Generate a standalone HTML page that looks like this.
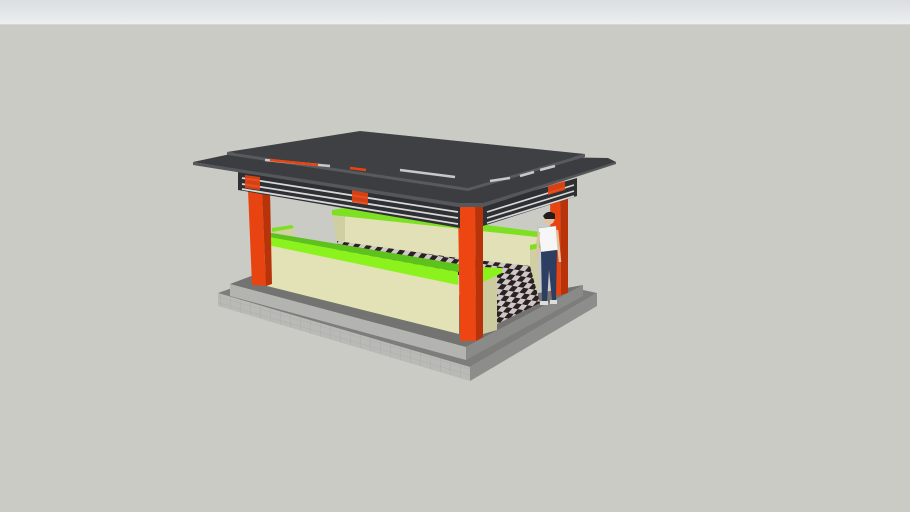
<!DOCTYPE html>
<html><head><meta charset="utf-8"><style>
html,body{margin:0;padding:0;width:910px;height:512px;overflow:hidden;background:#cbcbc6}
</style></head><body>
<svg width="910" height="512" viewBox="0 0 910 512" xmlns="http://www.w3.org/2000/svg">
<defs>
<linearGradient id="sky" x1="0" y1="0" x2="0" y2="1"><stop offset="0" stop-color="#dadee1"/><stop offset="1" stop-color="#eceeef"/></linearGradient>
<pattern id="chk" width="11" height="11" patternUnits="userSpaceOnUse" patternTransform="rotate(10) skewX(-30)">
<rect width="11" height="11" fill="#cfc6c6"/><rect width="5.5" height="5.5" fill="#2a2222"/><rect x="5.5" y="5.5" width="5.5" height="5.5" fill="#2a2222"/></pattern>
<pattern id="brick" width="10" height="6" patternUnits="userSpaceOnUse" patternTransform="skewY(16)">
<rect width="10" height="6" fill="#b9b9b6"/><path d="M0 0H10M0 0V6" stroke="#a2a29f" stroke-width="0.6"/></pattern>
</defs>
<rect width="910" height="24" fill="url(#sky)"/>
<rect y="24" width="910" height="1" fill="#d6d6d2"/>

<!-- lower slab -->
<polygon points="218,293 470,367 470,381 218,306" fill="url(#brick)"/>
<polygon points="470,367 597,293 597,306 470,381" fill="#8d8d8b"/>
<polygon points="218,293 232,288 470,355 583,290 597,293 470,367" fill="#7d7d7b"/>
<!-- upper slab -->
<polygon points="230,284 466,347 466,360 230,296" fill="#b3b3b0"/>
<polygon points="466,347 583,285 583,296 466,360" fill="#8a8a88"/>
<polygon points="230,284 262,272 500,300 583,285 466,347" fill="#737371"/>

<!-- back column -->
<polygon points="350,170 368,172 368,212 350,210" fill="#e84412"/>
<!-- back wall -->
<polygon points="337,215 337,242 532,268 537,237" fill="#e1e0b6"/>
<polygon points="332,214 345,211 345,241 337,242" fill="#cfcfa2"/>
<polygon points="332,210 350,207 540,232 537,237 332,215" fill="#7de022"/>
<polygon points="272,231 294,227 294,240 272,240" fill="#d0d0a4"/>
<polygon points="272,228 292,225 294,228 272,232" fill="#7de022"/>
<!-- right side wall -->
<polygon points="530,247 538,245 538,300 530,302" fill="#d0cfa4"/>
<polygon points="530,245 540,243 540,248 530,250" fill="#7de022"/>
<!-- checker floor -->
<polygon points="337,241 458,258 530,266 540,303 497,324 497,275 458,275 337,255" fill="url(#chk)"/>
<!-- front wall -->
<polygon points="263,242 459,284 459,334 267,286" fill="#e3e2b6"/>
<polygon points="483,280 497,276 497,330 483,334" fill="#cdcca0"/>
<!-- front cap -->
<polygon points="258,235 272,233 470,266 458,272" fill="#5ec21c"/>
<polygon points="258,235 458,272 458,285 258,243" fill="#8cf21e"/>
<polygon points="483,267 502,268 502,273 483,282" fill="#8cf21e"/>

<!-- columns -->
<polygon points="248,190 262,192 266,286 252,285" fill="#e84412"/>
<polygon points="262,192 270,190 272,284 266,286" fill="#b8330a"/>
<polygon points="458,205 475,205 476,341 460,341" fill="#ee4612"/>
<polygon points="475,205 483,203 483,337 476,341" fill="#b8330a"/>
<polygon points="550,192 560,192 561,295 551,296" fill="#e84412"/>
<polygon points="560,192 568,190 568,293 561,295" fill="#b8330a"/>

<!-- fascia -->
<polygon points="238,170 460,205 460,228 238,190" fill="#2f3033"/>
<path d="M242 178 L458 212 M242 184 L458 218 M242 189 L458 224" stroke="#d8d8d8" stroke-width="1.8"/>
<polygon points="245,175 260,177 260,190 245,188" fill="#e84412" opacity=".9"/>
<polygon points="352,190 368,193 368,205 352,202" fill="#e84412" opacity=".9"/>
<polygon points="483,205 577,178 577,196 483,226" fill="#2f3033"/>
<path d="M487 212 L574 185 M487 218 L574 191 M487 223 L574 196" stroke="#d8d8d8" stroke-width="1.7"/>
<polygon points="548,186 565,181 565,190 548,195" fill="#e84412" opacity=".9"/>

<!-- lower roof -->
<polygon points="193,162 240,152 608,158 616,162 483,205 458,205" fill="#3c3d40"/>
<polygon points="193,162 458,203 483,203 616,162 616,164 483,207 458,207 193,165" fill="#56575a"/>
<!-- upper roof -->
<polygon points="227,152 360,131 585,154 468,188" fill="#3f4043"/>
<polygon points="227,152 468,188 585,154 585,157 468,191 227,155" fill="#595a5d"/>
<path d="M265 160 L330 166 M400 170 L455 177 M490 181 L510 178 M520 176 L534 172 M540 170 L555 166" stroke="#c8c8c8" stroke-width="2.5"/>
<path d="M270 160 L318 165" stroke="#e84412" stroke-width="2.5"/>
<path d="M350 168 L366 170" stroke="#e84412" stroke-width="2.5"/>

<!-- person -->
<circle cx="549" cy="219" r="5.5" fill="#e2c2a0"/>
<path d="M543 216 Q548 209 555 214 L555 219 L545 219 Z" fill="#1e1e1e"/>
<polygon points="538,228 556,226 558,250 541,252" fill="#f6f6f6" stroke="#999" stroke-width=".4"/>
<polygon points="541,252 557,250 556,300 552,300 549,270 547,302 542,302" fill="#2c3e62"/>
<rect x="540" y="301" width="8" height="4" fill="#ddd"/><rect x="550" y="300" width="7" height="4" fill="#ddd"/>
<path d="M539 232 L537 258 M557 230 L560 262" stroke="#e2c2a0" stroke-width="2.5"/>
</svg>
</body></html>
